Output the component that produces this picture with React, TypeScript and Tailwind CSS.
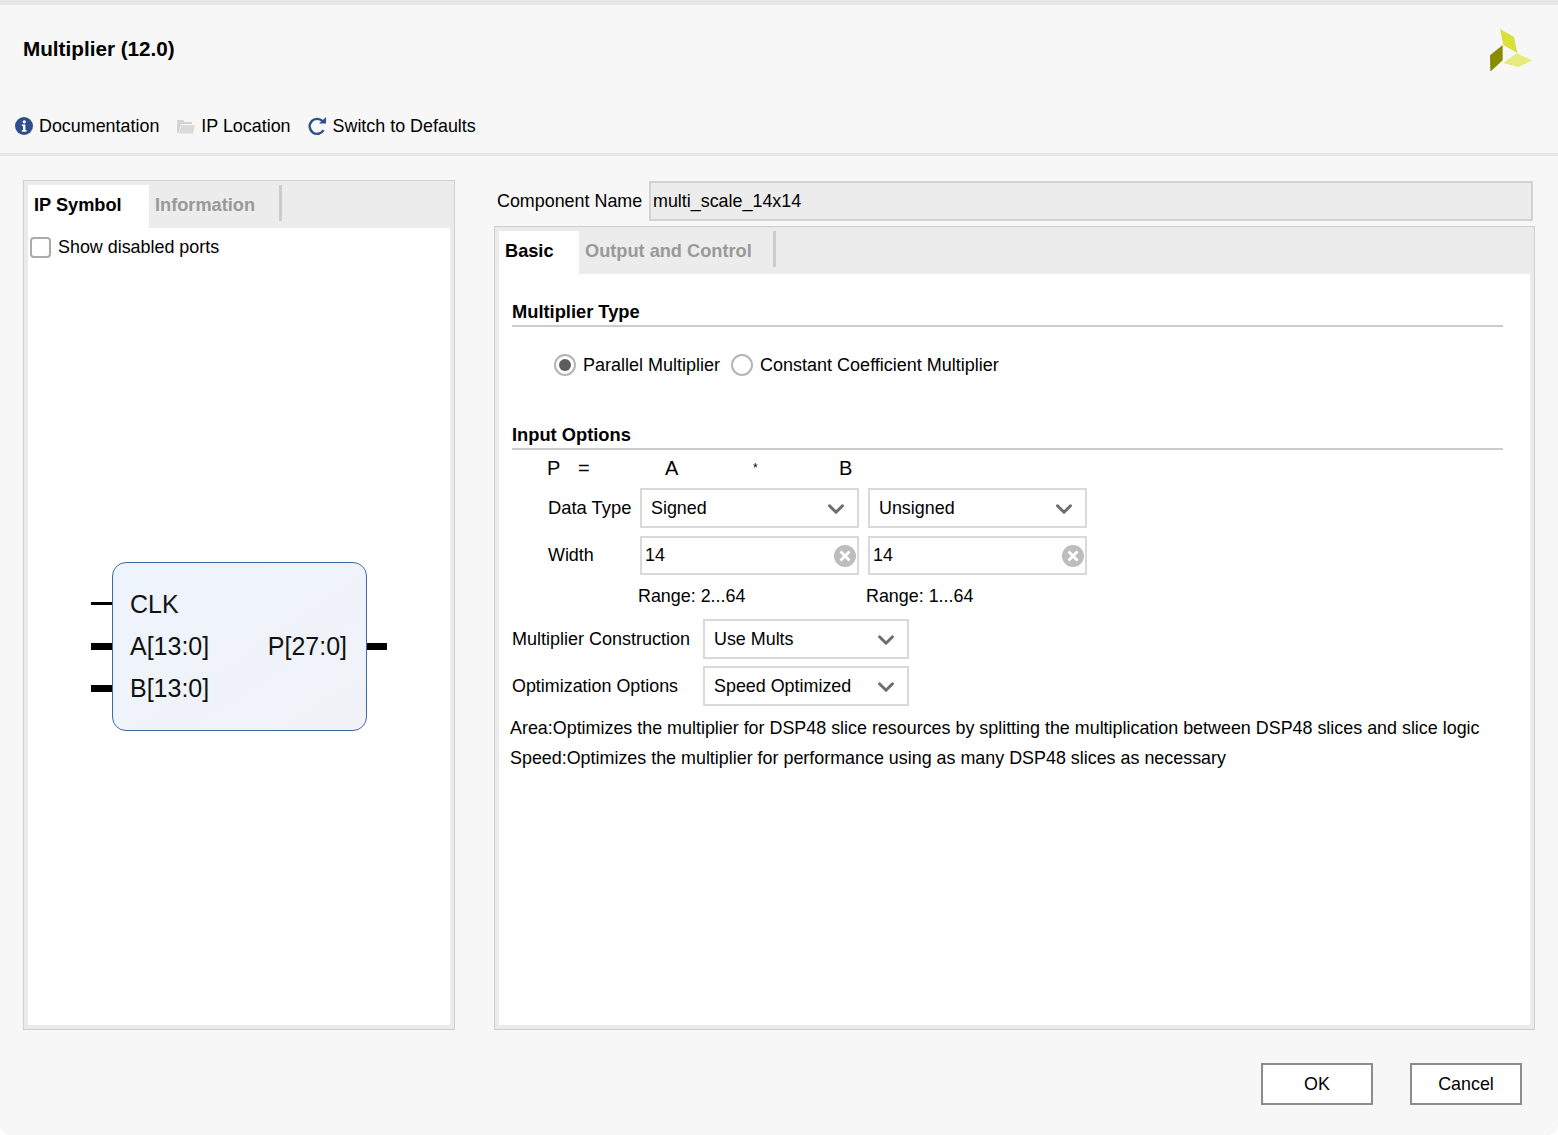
import { ChevronDown } from "lucide-react";

const font = "font-['Liberation_Sans',Arial,sans-serif]";

function InfoIcon() {
  return (
    <svg width="18" height="18" viewBox="0 0 18 18">
      <circle cx="9" cy="9" r="9" fill="#2f4f8a" />
      <circle cx="9.3" cy="4.8" r="1.6" fill="#fff" />
      <path d="M6.8 7.6h3.6v5.6h1.2v1.5H6.8v-1.5h1.2V9.1H6.8z" fill="#fff" />
    </svg>
  );
}

function FolderIcon() {
  return (
    <svg width="18" height="16" viewBox="0 0 18 16">
      <path d="M0 2h6l1.5 2H15v2H4L1.5 15H0z" fill="#d2d2d2" />
      <path d="M4.5 7H18l-2 8.5H2z" fill="#dadada" />
    </svg>
  );
}

function ResetIcon() {
  return (
    <svg width="19" height="19" viewBox="0 0 19 19" fill="none">
      <path d="M15.6 13.2A7.5 7.5 0 1 1 14.6 4.2" stroke="#2f4f8a" strokeWidth="2.4" />
      <path d="M11 6.6h7V0z" fill="#2f4f8a" />
    </svg>
  );
}

function ToolItem({ icon, label, className }: { icon: React.ReactNode; label: string; className: string }) {
  return (
    <div className={`flex items-center ${className}`}>
      {icon}
      <span>{label}</span>
    </div>
  );
}

function Tabs({ active, other, activeW, otherW }: { active: string; other: string; activeW: string; otherW: string }) {
  return (
    <div className="flex h-[43px] shrink-0 bg-[#ececec] text-[18.2px] font-bold">
      <div className={`flex items-center bg-white pb-[1px] pl-[6px] text-black ${activeW}`}>{active}</div>
      <div className={`flex h-[36px] items-center border-r-[3px] border-[#ccc] pl-[6px] pt-[5px] text-[#999] ${otherW}`}>{other}</div>
    </div>
  );
}

function Select({ value, className }: { value: string; className: string }) {
  return (
    <div className={`flex h-[40px] items-center justify-between border-2 border-[#d9d9d9] bg-white pl-[9px] pr-[8px] ${className}`}>
      <span>{value}</span>
      <ChevronDown size={26} strokeWidth={2.8} className="mt-[2px] text-[#6e6e6e]" />
    </div>
  );
}

function ClearInput({ value }: { value: string }) {
  return (
    <div className="flex h-[39px] w-[219px] items-center justify-between border-2 border-[#d9d9d9] bg-white pl-[3px] pr-[1px]">
      <span>{value}</span>
      <svg width="22" height="22" viewBox="0 0 22 22">
        <circle cx="11" cy="11" r="11" fill="#bdbdbd" />
        <path d="M6.5 6.5l9 9M15.5 6.5l-9 9" stroke="#fff" strokeWidth="2.8" />
      </svg>
    </div>
  );
}

function Radio({ checked }: { checked?: boolean }) {
  return (
    <div className="flex h-[22px] w-[22px] items-center justify-center rounded-full border-2 border-[#b5b5b5] bg-white">
      {checked && <div className="h-[12px] w-[12px] rounded-full bg-[#5c5c5c]" />}
    </div>
  );
}

function SectionTitle({ title }: { title: string }) {
  return (
    <div className="ml-[13px] mr-[27px] h-[27px] border-b-2 border-[#ccc] text-[18.3px] font-bold leading-[24px] text-black">
      {title}
    </div>
  );
}

function Pin({ top, left, width, height }: { top: string; left: string; width: string; height: string }) {
  return <div className={`absolute bg-black ${top} ${left} ${width} ${height}`} />;
}

export default function App() {
  return (
    <div className={`${font} flex h-[1135px] w-full flex-col overflow-hidden rounded-b-[10px] bg-[#f7f7f7] text-[17.9px] text-black`}>
      <div className="h-[5px] shrink-0 bg-[#e6e6e6]" />

      <header className="flex h-[96px] shrink-0 items-start justify-between pl-[23px] pr-[26px]">
        <h1 className="mt-[31px] text-[20.7px] font-bold leading-[26px]">Multiplier (12.0)</h1>
        <svg width="44" height="44" viewBox="0 0 44 44" className="mt-[22px]">
          <polygon points="12,2 26,10 29.3,26 15.3,18" fill="#d9e037" />
          <polygon points="2,28.3 14.7,18 14.7,33.3 2.3,44.7" fill="#8a8c00" />
          <polygon points="15.3,36 28.7,26.3 44.3,33.3 30.3,40" fill="#e6eb7c" />
        </svg>
      </header>

      <nav className="flex h-[55px] shrink-0 items-start border-b-[3px] border-[#e6e6e6] pl-[15px] pt-[14px] leading-[22px]">
        <ToolItem icon={<InfoIcon />} label="Documentation" className="gap-[6px]" />
        <ToolItem icon={<FolderIcon />} label="IP Location" className="ml-[18px] gap-[6px]" />
        <ToolItem icon={<ResetIcon />} label="Switch to Defaults" className="ml-[17px] gap-[6px]" />
      </nav>

      <main className="flex flex-1 items-start pl-[23px] pt-[24px]">
        {/* left panel */}
        <section className="flex h-[850px] w-[432px] flex-col border border-[#cfcfcf] bg-[#ebebeb] p-[4px]">
          <Tabs active="IP Symbol" other="Information" activeW="w-[121px]" otherW="w-[133px]" />
          <div className="relative flex-1 bg-white">
            <label className="absolute left-[2px] top-[8px] flex items-center gap-[7px] leading-[22px]">
              <span className="h-[21px] w-[21px] rounded-[4px] border-2 border-[#aaa] bg-white" />
              Show disabled ports
            </label>

            {/* IP symbol diagram */}
            <Pin top="top-[374px]" left="left-[63px]" width="w-[21px]" height="h-[3px]" />
            <Pin top="top-[415px]" left="left-[63px]" width="w-[21px]" height="h-[7px]" />
            <Pin top="top-[457px]" left="left-[63px]" width="w-[21px]" height="h-[7px]" />
            <Pin top="top-[415px]" left="left-[339px]" width="w-[20px]" height="h-[7px]" />
            <div className="absolute left-[84px] top-[334px] h-[169px] w-[255px] rounded-[14px] border border-[#3f67a8] bg-linear-to-br from-[#eef4fc] to-[#f0f2f7] text-[25px] leading-[30px] text-[#111]">
              <span className="absolute left-[17px] top-[26px]">CLK</span>
              <span className="absolute left-[17px] top-[68px]">A[13:0]</span>
              <span className="absolute left-[17px] top-[110px]">B[13:0]</span>
              <span className="absolute right-[19px] top-[68px]">P[27:0]</span>
            </div>
          </div>
        </section>

        {/* right column */}
        <div className="ml-[39px] mt-[1px] flex w-[1041px] flex-col">
          <div className="flex h-[40px] items-center">
            <span className="ml-[3px] w-[152px]">Component Name</span>
            <div className="mr-[2px] flex h-[40px] flex-1 items-center border-2 border-[#d2d2d2] bg-[#ececec] pl-[2px]">multi_scale_14x14</div>
          </div>

          <section className="mt-[5px] flex h-[804px] flex-col border border-[#cfcfcf] bg-[#ebebeb] p-[4px]">
            <Tabs active="Basic" other="Output and Control" activeW="w-[80px]" otherW="w-[197px]" />

            <div className="flex-1 bg-white pt-[26px]">
              <SectionTitle title="Multiplier Type" />
              <div className="ml-[55px] mt-[25px] flex h-[26px] items-center text-[18px]">
                <Radio checked />
                <span className="ml-[7px]">Parallel Multiplier</span>
                <span className="ml-[11px]"><Radio /></span>
                <span className="ml-[7px]">Constant Coefficient Multiplier</span>
              </div>

              <div className="mt-[45px]">
                <SectionTitle title="Input Options" />
              </div>

              <div className="ml-[48px] mt-[6px] flex h-[24px] items-center text-[20px] leading-[24px]">
                <span className="w-[31px]">P</span>
                <span className="w-[87px]">=</span>
                <span className="w-[88px]">A</span>
                <span className="w-[86px] text-[12px]">*</span>
                <span>B</span>
              </div>

              <div className="ml-[49px] mt-[8px] flex items-center">
                <span className="w-[92px] text-[18.4px]">Data Type</span>
                <Select value="Signed" className="w-[219px]" />
                <Select value="Unsigned" className="ml-[9px] w-[219px]" />
              </div>

              <div className="ml-[49px] mt-[8px] flex items-center">
                <span className="w-[92px]">Width</span>
                <ClearInput value="14" />
                <div className="ml-[9px]"><ClearInput value="14" /></div>
              </div>

              <div className="ml-[139px] mt-[9px] flex h-[24px] items-center">
                <span className="w-[228px]">Range: 2...64</span>
                <span>Range: 1...64</span>
              </div>

              <div className="ml-[13px] mt-[11px] flex items-center">
                <span className="w-[191px] text-[18px]">Multiplier Construction</span>
                <Select value="Use Mults" className="w-[206px]" />
              </div>
              <div className="ml-[13px] mt-[7px] flex items-center">
                <span className="w-[191px]">Optimization Options</span>
                <Select value="Speed Optimized" className="w-[206px]" />
              </div>

              <p className="ml-[11px] mt-[7px] leading-[30px]">
                Area:Optimizes the multiplier for DSP48 slice resources by splitting the multiplication between DSP48 slices and slice logic
                <br />
                Speed:Optimizes the multiplier for performance using as many DSP48 slices as necessary
              </p>
            </div>
          </section>
        </div>
      </main>

      <footer className="flex h-[105px] shrink-0 items-start justify-end pr-[36px] pt-[33px]">
        <button className="h-[42px] w-[112px] border-2 border-[#8c8c8c] bg-white">OK</button>
        <button className="ml-[37px] h-[42px] w-[112px] border-2 border-[#8c8c8c] bg-white">Cancel</button>
      </footer>
    </div>
  );
}
